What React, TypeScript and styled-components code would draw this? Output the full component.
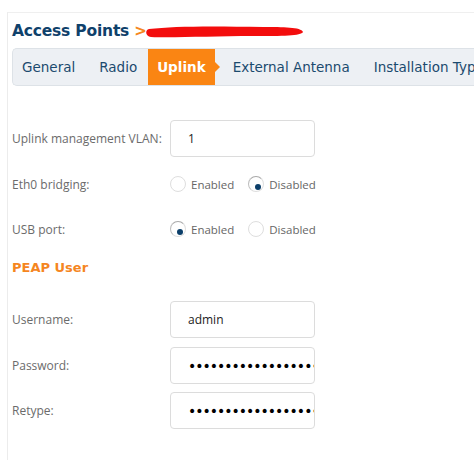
import React from "react";
import styled, { createGlobalStyle } from "styled-components";

const Global = createGlobalStyle`
  html, body { margin: 0; padding: 0; background: #fff; overflow: hidden; }
  body { font-family: "DejaVu Sans", Verdana, sans-serif; }
`;

const Panel = styled.div`
  margin: 12px 0 0 7px;
  border-left: 1px solid #ececec;
  border-top: 1px solid #efefef;
  padding-left: 4px;
  height: 460px;
  box-sizing: border-box;
`;

const TitleRow = styled.div`
  display: flex;
  align-items: center;
  height: 35px;
  white-space: nowrap;
`;

const Title = styled.h1`
  margin: 0;
  font-size: 15.5px;
  font-weight: bold;
  color: #0f416b;
  letter-spacing: -0.2px;
`;

const Crumb = styled.span`
  color: #f5871f;
  font-weight: bold;
  font-size: 15px;
  margin-left: 5px;
`;

const Scribble = styled.svg`
  margin-left: -4px;
  margin-top: 2px;
`;

const TabBar = styled.nav`
  display: flex;
  align-items: stretch;
  height: 38px;
  background: #edf0f4;
  border: 1px solid #dde2e7;
  border-right: none;
  border-radius: 5px 0 0 5px;
  box-sizing: border-box;
  white-space: nowrap;
  overflow: hidden;
`;

const Tab = styled.div<{ $active?: boolean }>`
  position: relative;
  display: flex;
  align-items: center;
  padding: 0 ${(p) => (p.$active ? "9px" : "0")};
  margin: ${(p) => (p.$active ? "-1px 18px -1px -13px" : "0 24px 0 0")};
  font-size: 13.5px;
  font-weight: ${(p) => (p.$active ? "bold" : "normal")};
  color: ${(p) => (p.$active ? "#fff" : "#1b4a6e")};
  background: ${(p) => (p.$active ? "#fa8513" : "transparent")};
  &:first-child { margin-left: 9px; }
  ${(p) =>
    p.$active &&
    `&::after {
      content: "";
      position: absolute;
      right: -5px;
      top: 50%;
      margin-top: -5px;
      border-left: 5px solid #fa8513;
      border-top: 5px solid transparent;
      border-bottom: 5px solid transparent;
    }`}
`;

const Form = styled.div`
  padding-top: 34px;
  display: flex;
  flex-direction: column;
`;

const Row = styled.div<{ $h: number; $mt: number }>`
  display: flex;
  align-items: center;
  height: ${(p) => p.$h}px;
  margin-top: ${(p) => p.$mt}px;
`;

const Label = styled.label`
  width: 158px;
  flex: none;
  font-size: 12px;
  color: #6b6b6b;
  font-family: "Open Sans", "DejaVu Sans", sans-serif;
`;

const Field = styled.input`
  width: 145px;
  height: 37px;
  box-sizing: border-box;
  border: 1px solid #dcdcdc;
  border-radius: 4px;
  padding: 0 0 0 17px;
  font-family: "Open Sans", "DejaVu Sans", sans-serif;
  font-size: 12px;
  color: #222;
  background: #fff;
  outline: none;
  &[type="password"] {
    font-family: "DejaVu Sans", sans-serif;
    font-size: 14px;
    letter-spacing: -1px;
    color: #000;
  }
`;

const Options = styled.div`
  display: flex;
  align-items: center;
  gap: 14px;
`;

const Option = styled.span`
  display: flex;
  align-items: center;
  gap: 5px;
  font-size: 11.5px;
  color: #666;
  font-family: "Open Sans", "DejaVu Sans", sans-serif;
`;

const Radio = styled.span<{ $on?: boolean }>`
  position: relative;
  width: 14px;
  height: 14px;
  border-radius: 50%;
  border: 1px solid #dedede;
  ${(p) => p.$on && `border-top-color: #a9a9a9; border-left-color: #bdbdbd;`}
  background: #fff;
  flex: none;
  ${(p) =>
    p.$on &&
    `&::after {
      content: "";
      position: absolute;
      width: 6px;
      height: 6px;
      border-radius: 50%;
      background: #0c3f6a;
      left: 6px;
      top: 7px;
    }`}
`;

const Section = styled.h2`
  margin: 0;
  font-size: 13px;
  font-weight: bold;
  color: #f5861f;
`;

export default function App() {
  return (
    <>
      <Global />
      <Panel>
        <TitleRow>
          <Title>Access Points</Title>
          <Crumb>&gt;</Crumb>
          <Scribble width="166" height="16" viewBox="0 0 166 16">
            <path
              d="M6 5 C30 2 70 2 120 3 C140 3 158 3 160 8 C158 12 140 12 110 12 C70 12 30 14 8 13 C2 12 2 6 6 5 Z"
              fill="#f30d0d"
            />
          </Scribble>
        </TitleRow>
        <TabBar>
          <Tab>General</Tab>
          <Tab>Radio</Tab>
          <Tab $active>Uplink</Tab>
          <Tab>External Antenna</Tab>
          <Tab>Installation Type</Tab>
        </TabBar>
        <Form>
          <Row $h={37} $mt={0}>
            <Label>Uplink management VLAN:</Label>
            <Field defaultValue="1" />
          </Row>
          <Row $h={28} $mt={13}>
            <Label>Eth0 bridging:</Label>
            <Options>
              <Option>
                <Radio />
                Enabled
              </Option>
              <Option>
                <Radio $on />
                Disabled
              </Option>
            </Options>
          </Row>
          <Row $h={28} $mt={17}>
            <Label>USB port:</Label>
            <Options>
              <Option>
                <Radio $on />
                Enabled
              </Option>
              <Option>
                <Radio />
                Disabled
              </Option>
            </Options>
          </Row>
          <Row $h={20} $mt={14}>
            <Section>PEAP User</Section>
          </Row>
          <Row $h={37} $mt={24}>
            <Label>Username:</Label>
            <Field defaultValue="admin" />
          </Row>
          <Row $h={37} $mt={9}>
            <Label>Password:</Label>
            <Field type="password" defaultValue="passwordpassword12345678" />
          </Row>
          <Row $h={37} $mt={8}>
            <Label>Retype:</Label>
            <Field type="password" defaultValue="passwordpassword12345678" />
          </Row>
        </Form>
      </Panel>
    </>
  );
}
